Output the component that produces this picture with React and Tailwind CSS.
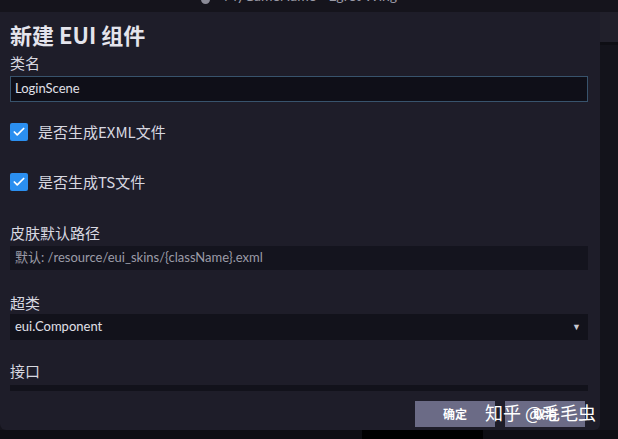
import { Check } from 'lucide-react'

const cjk = { fontFamily: '"Noto Sans CJK SC", "Noto Sans", sans-serif' }
const latin = { fontFamily: 'Lato, "Noto Sans CJK SC", sans-serif' }

function Label({ children, className = '' }) {
  return (
    <div className={`h-[20px] text-[15px] leading-[20px] text-[#d8d8e0] ${className}`} style={cjk}>
      {children}
    </div>
  )
}

function CheckRow({ label, className = '' }) {
  return (
    <div className={`flex h-[20px] items-center gap-[10px] ${className}`}>
      <div className="flex h-[18px] w-[18px] items-center justify-center rounded-[2px] bg-[#2b8ff0]">
        <Check size={14} strokeWidth={3} color="#ffffff" />
      </div>
      <span className="text-[15px] leading-[20px] text-[#d8d8e0]" style={cjk}>
        {label}
      </span>
    </div>
  )
}

export default function App() {
  return (
    <div className="relative flex h-[439px] w-[618px] flex-col overflow-hidden bg-[#15141c]">
      <div className="h-[12px] overflow-hidden">
        <div className="-mt-[12px] flex h-[16px] items-center justify-center gap-[14px] pr-[20px]">
          <div className="mt-[6px] h-[9px] w-[9px] rounded-full bg-[#8a8a96]" />
          <span className="text-[14px] leading-[16px] text-[#9a9aa6]" style={latin}>
            MyGameName - Egret Wing
          </span>
        </div>
      </div>

      <div className="flex flex-1">
        <div className="flex h-[418px] w-[600px] flex-col rounded-b-[6px] bg-[#1e1d29] pl-[10px] pr-[12px]">
          <h1 className="mt-[8px] h-[28px] text-[22px] font-bold leading-[28px] text-[#e4e4ec]" style={cjk}>
            新建 EUI 组件
          </h1>
          <Label className="mt-[5px]">类名</Label>
          <div className="mt-[3px] flex h-[26px] items-center border border-[#38536c] bg-[#0f0f18] px-[4px]">
            <span className="text-[13px] text-[#e0e0e8]" style={latin}>LoginScene</span>
          </div>

          <CheckRow label="是否生成EXML文件" className="mt-[20px]" />
          <CheckRow label="是否生成TS文件" className="mt-[30px]" />

          <Label className="mt-[31px]">皮肤默认路径</Label>
          <div className="mt-[3px] flex h-[24px] items-center bg-[#14141e] px-[5px]">
            <span className="text-[13px] text-[#9c9ca8]" style={latin}>
              默认: /resource/eui_skins/{'{className}'}.exml
            </span>
          </div>

          <Label className="mt-[23px]">超类</Label>
          <div className="mt-[1px] flex h-[26px] items-center justify-between bg-[#12121b] pl-[5px] pr-[7px]">
            <span className="text-[13px] text-[#e0e0e8]" style={latin}>eui.Component</span>
            <span className="text-[9px] text-[#c8c8d0]">▼</span>
          </div>

          <Label className="mt-[21px]">接口</Label>
          <div className="mt-[4px] h-[6px] bg-[#12121b]" />

          <div className="mr-[3px] mt-[10px] flex justify-end gap-[10px]">
            <button className="flex h-[26px] w-[80px] items-center justify-center bg-[#6b6b86] text-[12px] font-bold text-white" style={cjk}>
              确定
            </button>
            <button className="flex h-[26px] w-[80px] items-center justify-center bg-[#6b6b86] text-[12px] font-bold text-white" style={cjk}>
              取消
            </button>
          </div>
        </div>

        <div className="flex flex-1 flex-col">
          <div className="h-[30px] bg-[#21202b]" />
          <div className="h-[3px] bg-[#0e0e14]" />
          <div className="flex-1 bg-[#13131b]" />
        </div>
      </div>

      <div className="flex h-[9px] bg-[#0e0e13]">
        <div className="w-[362px]" />
        <div className="w-[121px] bg-black" />
      </div>

      <div
        className="absolute left-[485px] top-[400px] text-[18px] leading-[24px] text-white"
        style={cjk}
      >
        知乎 @毛毛虫
      </div>
    </div>
  )
}
